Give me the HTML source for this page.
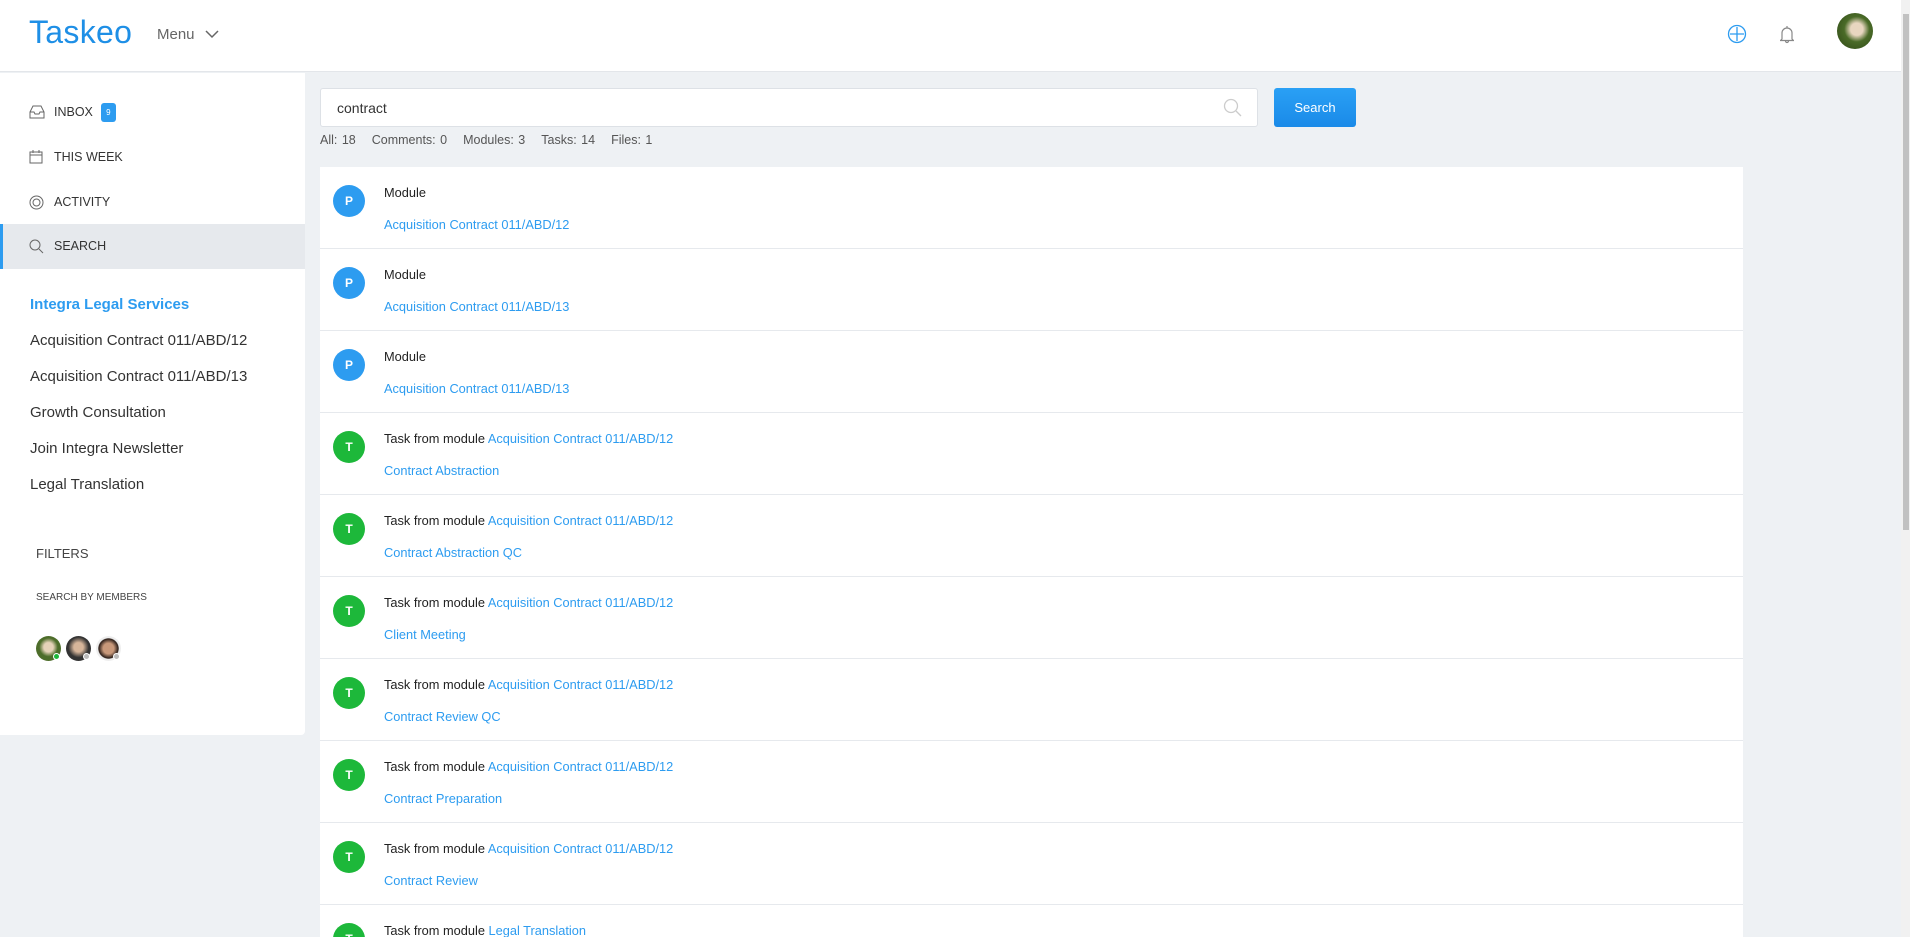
<!DOCTYPE html>
<html><head><meta charset="utf-8"><style>
*{box-sizing:border-box;margin:0;padding:0}
html,body{width:1910px;height:937px;overflow:hidden}
body{background:#eef1f4;font-family:"Liberation Sans",sans-serif;color:#333;position:relative}
.hdr{position:absolute;left:0;top:0;width:1901px;height:72px;background:#fff;border-bottom:1px solid #e3e6ea}
.logo{position:absolute;left:29px;top:14px;font-size:32px;color:#1e8fe6;letter-spacing:0.3px}
.menu{position:absolute;left:157px;top:26px;font-size:15px;color:#666}
.side{position:absolute;left:0;top:73px;width:305px;height:662px;background:#fff;border-radius:0 0 4px 0}
.nav{position:absolute;left:0;width:305px;height:45px;font-size:12.5px;color:#333;padding-left:54px;line-height:45px}
.nav svg{position:absolute;left:29px;top:15px}
.act{background:#e6e9ed;border-left:3px solid #2d9cf0}
.badge{display:inline-block;background:#2d9cf0;color:#fff;font-size:8px;border-radius:3px;width:15px;height:19px;line-height:19px;text-align:center;margin-left:8px;vertical-align:middle}
.proj{position:absolute;left:30px;font-size:15px;color:#333}
.inp{position:absolute;left:320px;top:88px;width:938px;height:39px;background:#fff;border:1px solid #dde1e6;border-radius:3px;font-size:14px;padding:11px 16px}
.btn{position:absolute;left:1274px;top:88px;width:82px;height:39px;background:linear-gradient(#2aa0f5,#1a8ae8);border-radius:3px;color:#fff;font-size:13px;text-align:center;line-height:39px}
.cnt{position:absolute;left:320px;top:133px;font-size:12.5px;color:#555;word-spacing:1px}
.cnt span{margin-right:16px}
.list{position:absolute;left:320px;top:167px;width:1423px;height:770px;background:#fff;overflow:hidden}
.row{position:absolute;left:0;width:1423px;height:82px;border-bottom:1.5px solid #e6e9ed}
.av{position:absolute;left:13px;top:18px;width:32px;height:32px;border-radius:50%;color:#fff;font-size:12px;font-weight:bold;text-align:center;line-height:32px}
.t1{position:absolute;left:64px;top:18px;font-size:12.8px;color:#222}
.t2{position:absolute;left:64px;top:50px;font-size:12.8px;color:#2d9cf0}
.b{color:#2d9cf0}
.sb{position:absolute;left:1901px;top:0;width:9px;height:937px;background:#f1f1f1}
.th{position:absolute;left:1903px;top:14px;width:6px;height:516px;background:#c1c1c1}
.ma{position:absolute;top:636px;width:25px;height:25px;border-radius:50%}
.dot{position:absolute;width:7px;height:7px;border-radius:50%;border:1px solid #fff}
</style></head><body>
<div class="hdr">
<div class="logo">Taskeo</div>
<div class="menu">Menu <svg width="14" height="10" viewBox="0 0 14 10" style="margin-left:6px"><path d="M1 2l6 6 6-6" stroke="#666" fill="none" stroke-width="1.5"/></svg></div>
<svg style="position:absolute;left:1727px;top:24px" width="20" height="20" viewBox="0 0 20 20"><circle cx="10" cy="10" r="8.5" stroke="#2d9cf0" fill="none" stroke-width="1.3"/><path d="M10 3v14M3 10h14" stroke="#2d9cf0" stroke-width="1.3"/></svg>
<svg style="position:absolute;left:1780px;top:24px" width="14" height="20" viewBox="0 0 14 20"><path d="M2 15V9a5 5 0 0 1 10 0v6l1.5 1.5h-13zM7 2v2M5.5 17a1.5 1.5 0 0 0 3 0" stroke="#888" fill="none" stroke-width="1.2"/></svg>
<div style="position:absolute;left:1837px;top:13px;width:36px;height:36px;border-radius:50%;background:radial-gradient(circle at 55% 45%,#e8d6c0 0 22%,#4a6b28 45%,#2d4515)"></div>
</div>
<div class="side">
<div class="nav" style="top:17px"><svg width="16" height="14" viewBox="0 0 16 14"><path d="M1 7l3-6h8l3 6v6H1zM1 7h4l1 2h4l1-2h4" stroke="#666" fill="none"/></svg>INBOX<span class="badge">9</span></div>
<div class="nav" style="top:62px"><svg width="14" height="14" viewBox="0 0 14 14"><rect x="1" y="2" width="12" height="11" stroke="#666" fill="none"/><path d="M1 5h12M4 0v3M10 0v3" stroke="#666"/></svg>THIS WEEK</div>
<div class="nav" style="top:107px"><svg width="15" height="15" viewBox="0 0 15 15"><circle cx="7.5" cy="7.5" r="6.5" stroke="#666" fill="none"/><circle cx="7.5" cy="7.5" r="3.5" stroke="#666" fill="none"/></svg>ACTIVITY</div>
<div class="nav act" style="top:151px;padding-left:51px"><svg width="15" height="15" viewBox="0 0 15 15" style="left:26px"><circle cx="6" cy="6" r="5" stroke="#666" fill="none"/><path d="M10 10l4 4" stroke="#666"/></svg>SEARCH</div>
<div class="proj" style="top:223px;color:#2d9cf0;font-weight:bold;font-size:15px">Integra Legal Services</div>
<div class="proj" style="top:259px">Acquisition Contract 011/ABD/12</div>
<div class="proj" style="top:295px">Acquisition Contract 011/ABD/13</div>
<div class="proj" style="top:331px">Growth Consultation</div>
<div class="proj" style="top:367px">Join Integra Newsletter</div>
<div class="proj" style="top:403px">Legal Translation</div>
<div style="position:absolute;left:36px;top:473px;font-size:13px;color:#444">FILTERS</div>
<div style="position:absolute;left:36px;top:519px;font-size:10px;color:#444">SEARCH BY MEMBERS</div>
</div>
<div class="ma" style="left:36px;top:636px;background:radial-gradient(circle at 50% 45%,#e5d2b8 0 25%,#4d6d2a 50%)"></div><div class="dot" style="left:53px;top:653px;background:#1db83a"></div>
<div class="ma" style="left:66px;top:636px;background:radial-gradient(circle at 50% 45%,#d6b59a 0 25%,#333 55%)"></div><div class="dot" style="left:83px;top:653px;background:#bbb"></div>
<div class="ma" style="left:96px;top:636px;background:radial-gradient(circle at 50% 50%,#c8987a 0 30%,#2a1d18 55%,#eee 60%)"></div><div class="dot" style="left:113px;top:653px;background:#bbb"></div>
<div class="inp">contract<svg style="position:absolute;right:14px;top:9px" width="20" height="20" viewBox="0 0 20 20"><circle cx="8" cy="8" r="6.5" stroke="#ccc" fill="none" stroke-width="1.3"/><path d="M13 13l5 5" stroke="#ccc" stroke-width="1.3"/></svg></div>
<div class="btn">Search</div>
<div class="cnt"><span>All: 18</span><span>Comments: 0</span><span>Modules: 3</span><span>Tasks: 14</span><span>Files: 1</span></div>
<div class="list">
<div class="row" style="top:0"><div class="av" style="background:#2d9cf0">P</div><div class="t1">Module</div><div class="t2">Acquisition Contract 011/ABD/12</div></div>
<div class="row" style="top:82px"><div class="av" style="background:#2d9cf0">P</div><div class="t1">Module</div><div class="t2">Acquisition Contract 011/ABD/13</div></div>
<div class="row" style="top:164px"><div class="av" style="background:#2d9cf0">P</div><div class="t1">Module</div><div class="t2">Acquisition Contract 011/ABD/13</div></div>
<div class="row" style="top:246px"><div class="av" style="background:#1db83a">T</div><div class="t1">Task from module <span class="b">Acquisition Contract 011/ABD/12</span></div><div class="t2">Contract Abstraction</div></div>
<div class="row" style="top:328px"><div class="av" style="background:#1db83a">T</div><div class="t1">Task from module <span class="b">Acquisition Contract 011/ABD/12</span></div><div class="t2">Contract Abstraction QC</div></div>
<div class="row" style="top:410px"><div class="av" style="background:#1db83a">T</div><div class="t1">Task from module <span class="b">Acquisition Contract 011/ABD/12</span></div><div class="t2">Client Meeting</div></div>
<div class="row" style="top:492px"><div class="av" style="background:#1db83a">T</div><div class="t1">Task from module <span class="b">Acquisition Contract 011/ABD/12</span></div><div class="t2">Contract Review QC</div></div>
<div class="row" style="top:574px"><div class="av" style="background:#1db83a">T</div><div class="t1">Task from module <span class="b">Acquisition Contract 011/ABD/12</span></div><div class="t2">Contract Preparation</div></div>
<div class="row" style="top:656px"><div class="av" style="background:#1db83a">T</div><div class="t1">Task from module <span class="b">Acquisition Contract 011/ABD/12</span></div><div class="t2">Contract Review</div></div>
<div class="row" style="top:738px"><div class="av" style="background:#1db83a">T</div><div class="t1">Task from module <span class="b">Legal Translation</span></div><div class="t2">Contract</div></div>
</div>
<div class="sb"></div><div class="th"></div>
</body></html>
